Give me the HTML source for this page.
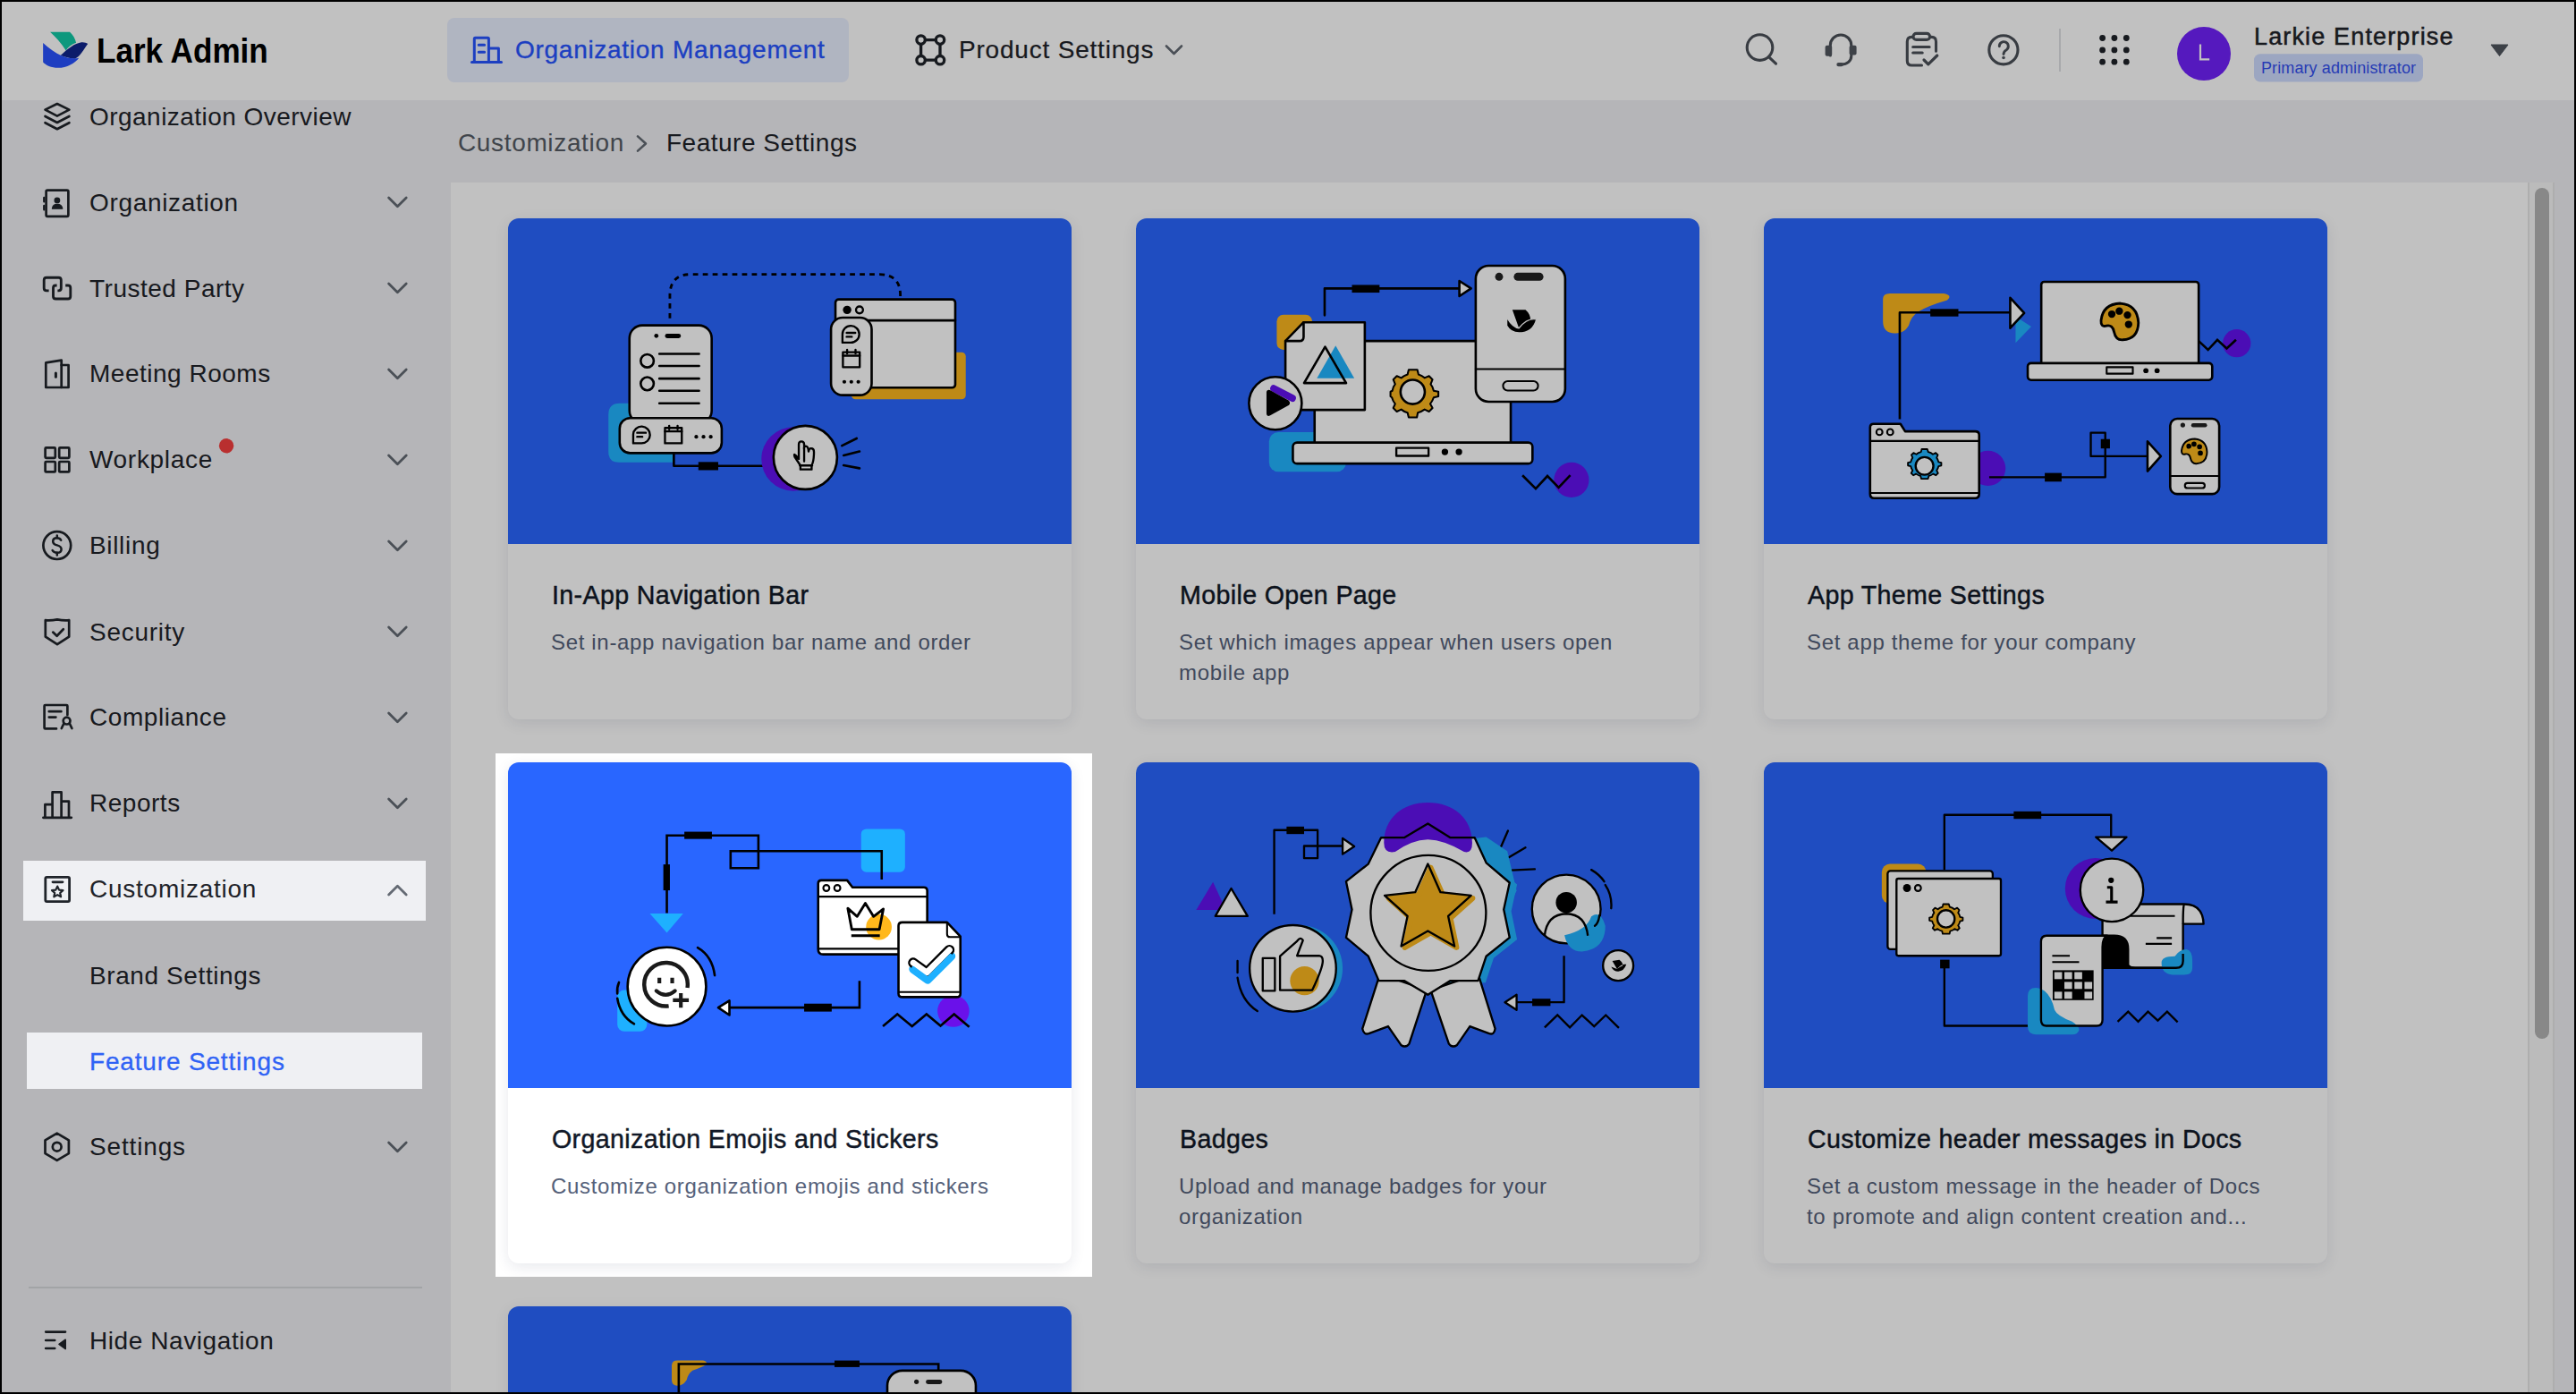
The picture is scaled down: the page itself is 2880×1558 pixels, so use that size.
<!DOCTYPE html>
<html><head><meta charset="utf-8">
<style>
*{box-sizing:border-box;margin:0;padding:0}
html,body{width:2880px;height:1558px;overflow:hidden;background:#000}
body{position:relative;font-family:"Liberation Sans",sans-serif;color:#1f2329}
.abs{position:absolute}
#hdr{left:2px;top:2px;width:2876px;height:110px;background:#fff}
#side{left:2px;top:112px;width:502px;height:1444px;background:#eff0f3}
#crumbbg{left:504px;top:112px;width:2374px;height:1444px;background:#eff0f3}
#cont{left:504px;top:204px;width:2322px;height:1352px;background:#fff}
#track{left:2826px;top:204px;width:30px;height:1352px;background:#f8f8f8;border-left:2px solid #e6e6e6;border-right:2px solid #e6e6e6}
#thumb{left:2834px;top:210px;width:16px;height:951px;border-radius:8px;background:#b4b4b4}
.nav{position:absolute;left:100px;height:60px;line-height:60px;font-size:28px;color:#1f2329;white-space:nowrap}
.ico{position:absolute}
.chev{position:absolute;left:433px;width:22px;height:12px}
.card{position:absolute;width:630px;height:560px;background:#fff;border-radius:12px;box-shadow:0 4px 16px rgba(25,40,75,0.10);overflow:hidden}
.card .img{position:absolute;left:0;top:0;width:630px;height:364px;background:#2966ff}
.card .t{position:absolute;left:49px;top:401px;height:40px;line-height:40px;font-size:28.6px;color:#111827;white-space:nowrap;-webkit-text-stroke:0.45px #111827;letter-spacing:0.36px}
.card .d{position:absolute;left:48px;top:457px;line-height:34px;font-size:24px;color:#55617a;white-space:nowrap;letter-spacing:0.67px}
#ovl{left:0;top:0;width:2880px;height:1558px;background:rgba(0,0,0,0.245);z-index:10}
.hl{z-index:11}
</style></head><body>
<div class="abs" id="hdr"></div>
<div class="abs" id="side"></div>
<div class="abs" id="crumbbg"></div>
<div class="abs" id="cont"></div>
<div class="abs" id="track"></div>
<div class="abs" id="thumb"></div>

<!-- HEADER -->
<!--HEADER_START-->
<svg class="abs" style="left:0;top:0" width="2880" height="120" viewBox="0 0 2880 120">
 <!-- logo: mapped from zoom [40,25]-[320,90] display 2576x598 -->
 <g transform="translate(40,25) scale(0.108696)">
  <path fill="#12c9a6" d="M148,100 L350,100 C385,130 405,170 415,210 C370,225 330,255 310,290 C260,210 200,150 148,100 Z"/>
  <path fill="#10268c" d="M255,340 C330,270 400,215 470,205 C500,203 520,210 535,220 C490,280 460,350 400,375 C350,370 300,355 255,340 Z"/>
  <path fill="#2852ff" d="M75,212 C140,270 200,315 260,340 C320,365 380,380 445,365 C400,420 320,468 230,468 C160,468 100,440 75,410 Z"/>
 </g>
 <!-- org mgmt button -->
 <rect x="500" y="20" width="449" height="72" rx="8" fill="#e9efff"/>
 <g fill="none" stroke="#2754ff" stroke-width="3" stroke-linecap="round" stroke-linejoin="round">
  <path d="M530.3,68 V43.5 Q530.3,42.3 531.5,42.3 H545.2 Q546.4,42.3 546.4,43.5 V68"/>
  <path d="M546.4,54 H557.4 V68"/>
  <path d="M527.5,69.6 H560.5"/>
  <path d="M535.2,50.3 H541.6 M535.2,58.2 H541.6"/>
 </g>
 <!-- product settings icon -->
 <g fill="none" stroke="#1f2329" stroke-width="3.3">
  <circle cx="1029.6" cy="44.6" r="4.7"/><circle cx="1051" cy="44.6" r="4.7"/>
  <circle cx="1029.6" cy="67.2" r="4.7"/><circle cx="1051" cy="67.2" r="4.7"/>
  <path d="M1034.3,44.6 H1046.3 M1034.3,67.2 H1046.3 M1029.6,49.3 V62.5 M1051,49.3 V62.5"/>
 </g>
 <path d="M1304,51.5 L1312.5,60 L1321,51.5" fill="none" stroke="#646a73" stroke-width="2.6" stroke-linecap="round" stroke-linejoin="round"/>
 <!-- right icons -->
 <g fill="none" stroke="#4b5058" stroke-width="3.1" stroke-linecap="round" stroke-linejoin="round">
  <circle cx="1967.5" cy="53.1" r="14.3"/>
  <path d="M1978.3,64.3 L1985.5,71.2"/>
  <path d="M2046.3,62 V50.7 A11.75,11.75 0 0 1 2069.8,50.7 V62.5 C2069.8,68 2065,72 2058.8,72"/>
  <path d="M2164.5,57.3 V46.4 Q2164.5,41.4 2159.5,41.4 H2137.3 Q2132.3,41.4 2132.3,46.4 V68 Q2132.3,73 2137.3,73 H2148.5"/>
  <rect x="2139" y="37.4" width="18.6" height="7" rx="3.5" fill="#fff"/>
  <path d="M2138.7,52.5 H2157.1 M2138.7,59 H2149.2"/>
  <path d="M2151,67 L2155.8,71.8 L2165.8,62" stroke-width="3.2"/>
  <circle cx="2239.9" cy="55.8" r="16.1"/>
  <path d="M2235.3,51.8 A5,5 0 1 1 2243.4,55.6 C2241.2,57 2240,58 2240,60.6" stroke-width="2.9"/>
 </g>
 <g fill="#51565f">
  <rect x="2040.6" y="50.7" width="7.6" height="12" rx="2"/>
  <rect x="2067.6" y="50.7" width="8" height="10.8" rx="2"/>
  <rect x="2053.3" y="69.9" width="7.6" height="4.4" rx="2.2"/>
  <circle cx="2240" cy="64.5" r="1.8"/>
 </g>
 <rect x="2302" y="32" width="2" height="48" fill="#dee0e3"/>
 <g fill="#1f2329">
  <circle cx="2350.6" cy="42.5" r="3.4"/><circle cx="2363.9" cy="42.5" r="3.4"/><circle cx="2377.3" cy="42.5" r="3.4"/>
  <circle cx="2350.6" cy="55.9" r="3.4"/><circle cx="2363.9" cy="55.9" r="3.4"/><circle cx="2377.3" cy="55.9" r="3.4"/>
  <circle cx="2350.6" cy="69.2" r="3.4"/><circle cx="2363.9" cy="69.2" r="3.4"/><circle cx="2377.3" cy="69.2" r="3.4"/>
 </g>
  <circle cx="2464" cy="60" r="30" fill="#7122fb"/>
 <path d="M2460,49.5 V66.3 H2470.2" fill="none" stroke="#fff" stroke-width="2.2"/>
 <rect x="2520" y="60.2" width="189" height="31.4" rx="7" fill="#cfdcff"/>
 <path d="M2785,50 L2804,50 L2794.5,62.5 Z" fill="#51565f" stroke="#51565f" stroke-width="1" stroke-linejoin="round"/>
</svg>
<div class="abs" style="left:108px;top:31px;height:52px;line-height:52px;font-size:39px;font-weight:bold;color:#000;white-space:nowrap;transform:scaleX(0.9);transform-origin:0 0">Lark Admin</div>
<div class="abs" style="left:576px;top:36px;height:40px;line-height:40px;font-size:28px;color:#2754ff;letter-spacing:0.72px;white-space:nowrap;-webkit-text-stroke:0.35px #2754ff">Organization Management</div>
<div class="abs" style="left:1072px;top:36px;height:40px;line-height:40px;font-size:28px;color:#1f2329;letter-spacing:0.8px;white-space:nowrap;-webkit-text-stroke:0.2px #1f2329">Product Settings</div>
<div class="abs" style="left:2520px;top:21px;height:40px;line-height:40px;font-size:27px;color:#1f2329;letter-spacing:1.15px;white-space:nowrap;-webkit-text-stroke:0.5px #1f2329">Larkie Enterprise</div>
<div class="abs" style="left:2528px;top:62px;height:28px;line-height:28px;font-size:18px;color:#3350f0;letter-spacing:0.1px;white-space:nowrap">Primary administrator</div>
<!--HEADER_END-->

<!-- SIDEBAR -->
<!--SIDEBAR_START-->
<svg class="abs" style="left:0;top:100px" width="504" height="1456" viewBox="0 100 504 1456">
 <g fill="none" stroke="#1f2329" stroke-width="2.7" stroke-linecap="round" stroke-linejoin="round">
  <!-- layers -->
  <path d="M50.5,122.6 L63.9,116 L77.4,122.6 L63.9,129.6 Z"/>
  <path d="M50.5,130 L63.9,137 L77.4,130"/>
  <path d="M50.5,137.2 L63.9,144.2 L77.4,137.2"/>
  <!-- organization -->
  <rect x="51.6" y="212.6" width="24.8" height="29.2" rx="1.5"/>
  <path d="M49.3,221 V225.3 M49.3,230 V234.3" stroke-width="2.4"/>
  <circle cx="63.9" cy="223.9" r="3.4" fill="#1f2329" stroke="none"/>
  <path d="M58.4,233.2 Q59,228.4 64,228.4 Q69,228.4 69.8,233.2 Z" fill="#1f2329" stroke-width="1.2"/>
  <!-- trusted party -->
  <path d="M54.6,324.9 H52 Q49.2,324.9 49.2,322 V313 Q49.2,310.2 52,310.2 H65.5 Q68.3,310.2 68.3,313 V322 Q68.3,324.9 65.5,324.9 H64.4" stroke-linecap="butt" stroke-width="2.85"/>
  <path d="M63.6,319 H62.3 Q59.5,319 59.5,321.8 V331.2 Q59.5,334 62.3,334 H76 Q78.8,334 78.8,331.2 V321.8 Q78.8,319 76,319 H73.2" stroke-linecap="butt" stroke-width="2.85"/>
  <!-- meeting rooms -->
  <path d="M51.3,433 V405.4 L68.7,402.7 V433 Z"/>
  <path d="M68.7,408 H76.6 V433 H68.7"/>
  <path d="M62.4,417 V421.2" stroke-width="3"/>
  <!-- workplace -->
  <rect x="50.6" y="500.4" width="11.2" height="11.4" rx="1"/>
  <rect x="66.2" y="500.4" width="11.2" height="11.4" rx="1"/>
  <rect x="50.6" y="516" width="11.2" height="11.4" rx="1"/>
  <rect x="66.2" y="516" width="11.2" height="11.4" rx="1"/>
  <!-- billing -->
  <circle cx="63.8" cy="609.6" r="15.4"/>
  <path d="M68.2,603.8 Q67,601.2 63.6,601.2 Q59.2,601.2 59.2,605 Q59.2,608.2 63.8,609.4 Q68.6,610.6 68.6,614 Q68.6,617.8 63.8,617.8 Q60,617.8 58.6,615" stroke-width="2.5"/>
  <path d="M63.8,598.6 V601.2 M63.8,617.8 V620.6" stroke-width="2.5"/>
  <!-- security -->
  <path d="M50.8,693.2 Q57,693.8 64,692.4 Q71,693.8 77.2,693.2 V711.6 L64,720.2 L50.8,711.6 Z"/>
  <path d="M59.2,706.6 L63.6,710.8 L70.8,703.2"/>
  <!-- compliance -->
  <path d="M63,814.4 H50.6 Q49.6,814.4 49.6,813.4 V789 Q49.6,788 50.6,788 H74.4 Q75.4,788 75.4,789 V799"/>
  <path d="M54.8,795.2 H68.4 M54.8,801.6 H62.4"/>
  <circle cx="74.6" cy="805.6" r="3.9"/>
  <path d="M71.2,809 L68.8,814 M78,809 L80.4,814"/>
  <!-- reports -->
  <path d="M50.4,913.6 V899.2 H58.6 V913.6 M58.6,913.6 V885.4 H68.6 V913.6 M68.6,913.6 V895.6 H77 V913.6"/>
  <path d="M48.4,913.8 H79.8"/>
  <!-- settings -->
  <path d="M63.7,1266.7 L76.9,1274.3 V1289.1 L63.7,1296.9 L50.5,1289.1 V1274.3 Z"/>
  <circle cx="63.7" cy="1281.7" r="4.9"/>
  <!-- hide nav -->
  <path d="M51.2,1488.6 H73 M51.2,1498 H61.2 M51.2,1507 H61.2"/>
 </g>
 <path d="M73.2,1497.2 L66,1502.4 L73.2,1507.6 Z" fill="#1f2329" stroke="#1f2329" stroke-width="1.6" stroke-linejoin="round"/>
 <circle cx="253.1" cy="498.3" r="8.2" fill="#f53f3f"/>
 <g fill="none" stroke="#646a73" stroke-width="2.8" stroke-linecap="round" stroke-linejoin="round">
  <path d="M434.6,221 L444.4,230.8 L454.2,221"/>
  <path d="M434.6,317 L444.4,326.8 L454.2,317"/>
  <path d="M434.6,413 L444.4,422.8 L454.2,413"/>
  <path d="M434.6,509 L444.4,518.8 L454.2,509"/>
  <path d="M434.6,605 L444.4,614.8 L454.2,605"/>
  <path d="M434.6,701 L444.4,710.8 L454.2,701"/>
  <path d="M434.6,797 L444.4,806.8 L454.2,797"/>
  <path d="M434.6,893 L444.4,902.8 L454.2,893"/>
  <path d="M434.6,1277 L444.4,1286.8 L454.2,1277"/>
 </g>
 <rect x="32" y="1438" width="440" height="2" fill="#d7d9dc"/>
</svg>
<div class="nav" style="top:101px;letter-spacing:0.465px">Organization Overview</div>
<div class="nav" style="top:197px;letter-spacing:0.673px">Organization</div>
<div class="nav" style="top:293px;letter-spacing:0.508px">Trusted Party</div>
<div class="nav" style="top:388px;letter-spacing:0.508px">Meeting Rooms</div>
<div class="nav" style="top:484px;letter-spacing:0.688px">Workplace</div>
<div class="nav" style="top:580px;letter-spacing:0.667px">Billing</div>
<div class="nav" style="top:677px;letter-spacing:0.729px">Security</div>
<div class="nav" style="top:772px;letter-spacing:0.567px">Compliance</div>
<div class="nav" style="top:868px;letter-spacing:0.517px">Reports</div>
<div class="nav" style="top:1061px;letter-spacing:0.6px">Brand Settings</div>
<div class="nav" style="top:1252px;letter-spacing:0.85px">Settings</div>
<div class="nav" style="top:1469px;letter-spacing:0.579px">Hide Navigation</div>
<!--SIDEBAR_END-->

<!-- CONTENT -->
<!--CONTENT_START-->
<div class="abs" style="left:512px;top:140px;height:40px;line-height:40px;font-size:28px;color:#555b63;letter-spacing:0.65px;white-space:nowrap">Customization</div>
<svg class="abs" style="left:700px;top:140px" width="40" height="40" viewBox="700 140 40 40"><path d="M713,152.4 L722,160.5 L713,168.6" fill="none" stroke="#646a73" stroke-width="2.6" stroke-linecap="round" stroke-linejoin="round"/></svg>
<div class="abs" style="left:745px;top:140px;height:40px;line-height:40px;font-size:28px;color:#1f2329;letter-spacing:0.5px;white-space:nowrap">Feature Settings</div>

<div class="card" style="left:568px;top:244px"><div class="img"><svg width="630" height="364" viewBox="0 0 2413 1394" style="position:absolute;left:0;top:0">
<g stroke="#000" stroke-width="10" stroke-linejoin="round" stroke-linecap="round">
 <path d="M693,428 V330 Q693,240 783,240 H1590 Q1680,240 1680,330 V345" fill="none" stroke-dasharray="22,20" stroke-linecap="butt" stroke-width="11"/>
 <path d="M430,840 Q430,792 478,792 H560 L705,1000 V1045 H475 Q430,1045 430,1000 Z" fill="#22b4ff" stroke="none"/>
 <rect x="520" y="458" width="352" height="420" rx="55" fill="#fff"/>
 <circle cx="635" cy="503" r="9" fill="#000" stroke="none"/>
 <rect x="672" y="494" width="68" height="19" rx="9.5" fill="#000" stroke="none"/>
 <circle cx="596" cy="610" r="28" fill="none"/>
 <circle cx="596" cy="708" r="28" fill="none"/>
 <path d="M648,580 H818 M648,632 H818 M648,686 H818 M648,738 H818 M648,792 H818" fill="none"/>
 <path d="M710,1000 V1060 H1092" fill="none"/>
 <rect x="815" y="1043" width="85" height="35" fill="#000" stroke="none"/>
 <rect x="478" y="855" width="437" height="150" rx="45" fill="#fff"/>
 <path d="M536,963 V925 A36,36 0 1 1 572,963 Z M553,918 H590 M553,935 H575" fill="none" stroke-width="9"/>
 <rect x="672" y="897" width="72" height="66" fill="none" stroke-width="9"/>
 <path d="M672,912 H744 M690,888 V903 M726,888 V903" fill="none" stroke-width="9"/>
 <circle cx="806" cy="935" r="8" fill="#000" stroke="none"/><circle cx="837" cy="935" r="8" fill="#000" stroke="none"/><circle cx="868" cy="935" r="8" fill="#000" stroke="none"/>
 <circle cx="1222" cy="1030" r="137" fill="#6412f0" stroke="none"/>
 <circle cx="1273" cy="1024" r="136" fill="#fff"/>
 <path d="M1268,1040 V968 Q1268,955 1256,955 Q1245,955 1245,968 V1030 L1232,1015 Q1222,1005 1228,1022 L1252,1058 V1075 H1300 V1058 Q1310,1040 1310,1000 Q1310,985 1298,985 Q1288,985 1287,998 Q1285,975 1275,975 Q1265,977 1268,990" fill="none" stroke-width="9"/>
 <path d="M1250,1058 H1302" fill="none" stroke-width="9"/>
 <path d="M1430,973 L1493,942 M1437,1015 L1505,998 M1437,1057 L1505,1070" fill="none"/>
 <rect x="1470" y="573" width="490" height="202" rx="18" fill="#fbb71f" stroke="none"/>
 <rect x="1402" y="347" width="513" height="378" rx="14" fill="#fff"/>
 <path d="M1402,437 H1915" fill="none"/>
 <circle cx="1452" cy="392" r="18" fill="#000" stroke="none"/>
 <circle cx="1505" cy="392" r="15" fill="none" stroke-width="9"/>
 <rect x="1383" y="425" width="174" height="332" rx="50" fill="#fff"/>
 <path d="M1432,532 V497 A36,36 0 1 1 1468,532 Z M1450,490 H1487 M1450,507 H1472" fill="none" stroke-width="9"/>
 <rect x="1434" y="573" width="72" height="64" fill="none" stroke-width="9"/>
 <path d="M1434,588 H1506 M1452,563 V578 M1488,563 V578" fill="none" stroke-width="9"/>
 <circle cx="1440" cy="700" r="8" fill="#000" stroke="none"/><circle cx="1470" cy="700" r="8" fill="#000" stroke="none"/><circle cx="1500" cy="700" r="8" fill="#000" stroke="none"/>
</g>
</svg></div><div class="t">In-App Navigation Bar</div><div class="d">Set in-app navigation bar name and order</div></div>
<div class="card" style="left:1270px;top:244px"><div class="img"><svg width="630" height="364" viewBox="0 0 2413 1394" style="position:absolute;left:0;top:0">
<g stroke="#000" stroke-width="10" stroke-linejoin="round" stroke-linecap="round">
 <rect x="570" y="915" width="330" height="170" rx="40" fill="#22b4ff" stroke="none"/>
 <rect x="765" y="525" width="840" height="450" fill="#fff"/>
 <rect x="672" y="960" width="1026" height="90" rx="18" fill="#fff"/>
 <rect x="1115" y="983" width="138" height="34" fill="none" stroke-width="9"/>
 <circle cx="1323" cy="1000" r="14" fill="#000" stroke="none"/><circle cx="1383" cy="1000" r="14" fill="#000" stroke="none"/>
 <path d="M1185,648 L1205,648 L1210,668 Q1225,673 1236,683 L1255,675 L1270,690 L1262,710 Q1272,722 1275,738 L1295,742 V762 L1275,767 Q1270,782 1260,794 L1270,812 L1255,827 L1236,818 Q1222,828 1207,832 L1203,852 H1168 L1163,832 Q1148,828 1136,818 L1117,827 L1102,812 L1110,794 Q1100,782 1096,767 L1090,762 V742 L1098,738 Q1100,722 1110,710 L1102,690 L1117,675 L1136,683 Q1148,673 1163,668 L1168,648 Z" fill="#fbb71f" stroke-width="8"/>
 <circle cx="1185" cy="743" r="52" fill="#fff" stroke-width="10"/>
 <path d="M808,415 V300 H1385" fill="none"/>
 <rect x="925" y="285" width="118" height="33" fill="#000" stroke="none"/>
 <path d="M1385,268 L1435,300 L1385,333 Z" fill="#fff"/>
 <rect x="603" y="413" width="152" height="150" rx="28" fill="#fbb71f" stroke="none"/>
 <path d="M640,525 L718,445 H980 V820 H640 Z" fill="#fff"/>
 <path d="M640,525 H700 Q718,525 718,507 V445" fill="none"/>
 <path d="M855,545 L935,685 H775 Z" fill="#22b4ff" stroke="none"/>
 <path d="M810,550 L900,705 H720 Z" fill="none"/>
 <circle cx="597" cy="792" r="113" fill="#fff"/>
 <path d="M590,728 L670,770" stroke="#6412f0" stroke-width="30" fill="none"/>
 <path d="M562,745 Q562,735 572,738 L652,782 Q660,790 652,798 L572,842 Q562,846 562,835 Z" fill="#000" stroke-width="6"/>
 <rect x="1455" y="203" width="383" height="582" rx="55" fill="#fff"/>
 <path d="M1455,645 H1838" fill="none" stroke-width="8"/>
 <circle cx="1555" cy="250" r="17" fill="#222" stroke="none"/>
 <rect x="1618" y="233" width="127" height="34" rx="17" fill="#222" stroke="none"/>
 <rect x="1572" y="697" width="150" height="40" rx="20" fill="none" stroke-width="8"/>
 <path d="M1612,392 L1668,392 Q1690,410 1690,440 Q1660,445 1640,470 Z" fill="#000" stroke="none"/>
 <path d="M1640,470 Q1675,425 1715,432 Q1700,490 1640,490 Q1605,490 1588,460 L1588,425 Q1615,470 1640,470 Z" fill="#000" stroke="#fff" stroke-width="5"/>
 <circle cx="1865" cy="1120" r="75" fill="#6412f0" stroke="none"/>
 <path d="M1655,1100 L1712,1157 L1762,1103 L1810,1152 L1860,1100" fill="none" stroke-linecap="butt" stroke-linejoin="miter"/>
</g>
</svg></div><div class="t">Mobile Open Page</div><div class="d">Set which images appear when users open<br>mobile app</div></div>
<div class="card" style="left:1972px;top:244px"><div class="img"><svg width="630" height="364" viewBox="0 0 2413 1394" style="position:absolute;left:0;top:0">

<g stroke="#000" stroke-width="10" stroke-linejoin="round" stroke-linecap="butt">
 <path d="M510,345 Q510,322 540,322 H770 Q810,330 785,350 Q700,375 660,400 Q630,420 620,460 Q600,495 560,492 Q510,490 510,440 Z" fill="#fbb71f" stroke="none"/>
 <path d="M582,860 V403 H1055" fill="none"/>
 <rect x="713" y="388" width="120" height="32" fill="#000" stroke="none"/>
 <path d="M1078,420 L1145,463 L1078,533 Z" fill="#22b4ff" stroke="none"/>
 <path d="M1055,340 L1115,405 L1055,470 Z" fill="#fff"/>
 <rect x="1188" y="272" width="674" height="358" rx="12" fill="#fff"/>
 <rect x="1130" y="620" width="790" height="72" rx="14" fill="#fff"/>
 <rect x="1468" y="637" width="112" height="28" fill="none" stroke-width="8"/>
 <circle cx="1636" cy="652" r="11" fill="#000" stroke="none"/><circle cx="1684" cy="652" r="11" fill="#000" stroke="none"/>
 <g transform="translate(1522,442)">
  <path d="M-78,-5 Q-70,-75 5,-78 Q78,-72 82,5 Q80,75 15,78 Q-15,80 -22,45 Q-28,12 -55,18 Q-80,25 -78,-5 Z" fill="#fbb71f" stroke="#000" stroke-width="11"/>
  <circle cx="-32" cy="-32" r="11" fill="#000"/><circle cx="0" cy="-45" r="11" fill="#000"/><circle cx="35" cy="-28" r="11" fill="#000"/><circle cx="40" cy="12" r="11" fill="#000"/>
 </g>
 <circle cx="2025" cy="535" r="60" fill="#6412f0" stroke="none"/>
 <path d="M1862,525 L1902,563 L1942,520 L1982,557 L2022,520" fill="none" stroke-linejoin="miter"/>
 <circle cx="960" cy="1070" r="75" fill="#6412f0" stroke="none"/>
 <path d="M455,1180 V895 Q455,880 470,880 H585 L605,912 H905 Q922,912 922,928 V1180 Q922,1198 905,1198 H472 Q455,1198 455,1180 Z" fill="#fff"/>
 <path d="M455,953 H922 M455,1176 H922" fill="none" stroke-width="8"/>
 <circle cx="495" cy="915" r="13" fill="none" stroke-width="8"/><circle cx="541" cy="915" r="13" fill="none" stroke-width="8"/>
 <path d="M688,988 L700,988 L704,1000 Q716,1003 724,1010 L736,1004 L745,1013 L740,1025 Q746,1033 748,1043 L760,1046 V1058 L748,1061 Q746,1071 740,1079 L746,1091 L737,1100 L725,1094 Q716,1101 706,1103 L703,1115 H674 L671,1103 Q661,1101 652,1094 L640,1100 L631,1091 L637,1079 Q631,1071 629,1061 L617,1058 V1046 L629,1043 Q631,1033 637,1025 L632,1013 L641,1004 L653,1010 Q661,1003 673,1000 L676,988 Z" fill="#22b4ff" stroke-width="7"/>
 <circle cx="688" cy="1060" r="38" fill="#fff" stroke-width="9"/>
 <path d="M965,1108 H1462 V918 H1400 V1018 H1645" fill="none" stroke-width="9"/>
 <rect x="1203" y="1090" width="72" height="37" fill="#000" stroke="none"/>
 <rect x="1443" y="945" width="39" height="40" fill="#000" stroke="none"/>
 <path d="M1643,955 L1700,1018 L1643,1082 Z" fill="#fff"/>
 <rect x="1740" y="858" width="210" height="322" rx="30" fill="#fff"/>
 <path d="M1740,1103 H1950" fill="none" stroke-width="8"/>
 <circle cx="1794" cy="885" r="10" fill="#222" stroke="none"/>
 <rect x="1830" y="877" width="68" height="17" rx="8.5" fill="#222" stroke="none"/>
 <rect x="1803" y="1133" width="85" height="22" rx="11" fill="none" stroke-width="8"/>
 <g transform="translate(1842,997) scale(0.68)">
  <path d="M-78,-5 Q-70,-75 5,-78 Q78,-72 82,5 Q80,75 15,78 Q-15,80 -22,45 Q-28,12 -55,18 Q-80,25 -78,-5 Z" fill="#fbb71f" stroke="#000" stroke-width="11"/>
  <circle cx="-32" cy="-32" r="11" fill="#000"/><circle cx="0" cy="-45" r="11" fill="#000"/><circle cx="35" cy="-28" r="11" fill="#000"/><circle cx="40" cy="12" r="11" fill="#000"/>
 </g>
</g>
</svg></div><div class="t">App Theme Settings</div><div class="d">Set app theme for your company</div></div>
<div class="abs hl" style="left:554px;top:842px;width:667px;height:585px;background:#fff;overflow:hidden"><div class="card" style="left:14px;top:10px"><div class="img"><svg width="630" height="364" viewBox="0 0 2413 1394" style="position:absolute;left:0;top:0">
<g stroke="#000" stroke-width="10" stroke-linejoin="miter" stroke-linecap="butt">
 <rect x="1512" y="285" width="188" height="185" rx="22" fill="#1eb0ff" stroke="none"/>
 <path d="M680,645 V313 H1072 V453 H953 V380 H1600 V502" fill="none"/>
 <rect x="755" y="297" width="118" height="31" fill="#000" stroke="none"/>
 <rect x="665" y="437" width="28" height="111" fill="#000" stroke="none"/>
 <path d="M607,647 H750 L680,730 Z" fill="#1eb0ff" stroke="none"/>
 <rect x="468" y="975" width="127" height="177" rx="30" fill="#1eb0ff" stroke="none"/>
 <path d="M475,942 Q465,965 468,990" fill="none" stroke-linecap="round"/>
 <path d="M468,1010 Q480,1085 540,1120" fill="none" stroke-linecap="round"/>
 <path d="M812,793 Q875,830 885,912" fill="none" stroke-linecap="round"/>
 <circle cx="680" cy="960" r="168" fill="#fff"/>
 <path d="M768,965 A93,93 0 1 0 688,1043" fill="none" stroke="#1a1a1a" stroke-width="17"/>
 <path d="M648,922 V946 M703,922 V946" fill="none" stroke="#1a1a1a" stroke-width="16"/>
 <path d="M635,978 Q675,1012 715,978" fill="none" stroke="#1a1a1a" stroke-width="16" stroke-linecap="round"/>
 <path d="M740,988 V1050 M706,1018 H774" fill="none" stroke="#1a1a1a" stroke-width="16"/>
 <path d="M1505,935 V1050 H950" fill="none"/>
 <rect x="1268" y="1033" width="118" height="34" fill="#000" stroke="none"/>
 <path d="M900,1050 L948,1020 V1082 Z" fill="#fff" stroke-linejoin="round"/>
 <path d="M1328,800 V518 Q1328,505 1342,505 H1452 L1475,535 H1780 Q1795,535 1795,550 V800 Q1795,822 1775,822 H1350 Q1328,822 1328,800 Z" fill="#fff" stroke-linejoin="round"/>
 <path d="M1328,575 H1795 M1328,798 H1795" fill="none" stroke-width="8"/>
 <circle cx="1363" cy="538" r="13" fill="none" stroke-width="8"/><circle cx="1410" cy="538" r="13" fill="none" stroke-width="8"/>
 <circle cx="1588" cy="705" r="55" fill="#ffb81c" stroke="none"/>
 <path d="M1455,625 L1472,715 H1590 L1607,628 L1565,660 L1530,603 L1495,660 Z" fill="none" stroke-width="11" stroke-linejoin="round"/>
 <path d="M1470,742 H1592" fill="none" stroke-width="11"/>
 <circle cx="1907" cy="1065" r="68" fill="#6a11ea" stroke="none"/>
 <path d="M1672,990 V700 Q1672,685 1688,685 H1880 L1937,745 V990 Q1937,1005 1920,1005 H1690 Q1672,1005 1672,990 Z" fill="#fff" stroke-linejoin="round"/>
 <path d="M1880,685 V735 Q1880,748 1893,748 H1937 M1672,983 H1937" fill="none" stroke-width="8"/>
 <path d="M1735,885 L1797,930 L1898,830" fill="none" stroke="#1eb0ff" stroke-width="36" stroke-linecap="round" stroke-linejoin="round"/>
 <path d="M1735,858 L1793,900 L1890,803" fill="none" stroke="#000" stroke-width="44" stroke-linecap="round" stroke-linejoin="round"/>
 <path d="M1735,858 L1793,900 L1890,803" fill="none" stroke="#fff" stroke-width="26" stroke-linecap="round" stroke-linejoin="round"/>
 <path d="M1735,880 L1797,925 L1895,826" fill="none" stroke="#1eb0ff" stroke-width="14" stroke-linecap="round" stroke-linejoin="round"/>
 <path d="M1605,1130 L1667,1078 L1730,1130 L1792,1078 L1852,1128 L1910,1078 L1975,1133" fill="none"/>
</g>
</svg></div><div class="t">Organization Emojis and Stickers</div><div class="d">Customize organization emojis and stickers</div></div></div>
<div class="card" style="left:1270px;top:852px"><div class="img"><svg width="630" height="364" viewBox="0 0 2413 1394" style="position:absolute;left:0;top:0">

<g stroke="#000" stroke-width="9" stroke-linejoin="round" stroke-linecap="butt">
 <path d="M258,632 L330,512 L385,632 Z" fill="#6412f0" stroke="none"/>
 <path d="M340,658 L408,540 L478,658 Z" fill="#fff"/>
 <path d="M592,650 V290 H778 V410 H720 V358 H885" fill="none"/>
 <rect x="645" y="275" width="75" height="32" fill="#000" stroke="none"/>
 <path d="M885,325 L935,360 L885,393 Z" fill="#fff"/>
 <path d="M1555,380 L1593,293 M1587,413 L1668,365 M1608,462 L1708,457" fill="none" stroke-linecap="round"/>
 <circle cx="700" cy="882" r="185" fill="#22b4ff" stroke="none"/>
 <circle cx="672" cy="882" r="185" fill="#fff"/>
 <path d="M435,850 V900 M435,922 Q450,1020 520,1065" fill="none" stroke-linecap="round"/>
 <circle cx="722" cy="935" r="62" fill="#fbb71f" stroke="none"/>
 <rect x="543" y="838" width="52" height="140" fill="none"/>
 <path d="M617,975 V830 L690,765 Q705,745 715,762 L690,828 H785 Q800,830 800,850 Q800,880 755,975 Z" fill="none"/>
 <path d="M1290,990 L1370,940 L1530,700 L1600,550 L1560,380 L1470,320 L1290,340 Z" fill="#22b4ff" stroke="none" transform="translate(30,0)"/>
 <path d="M1050,322 H1150 L1250,262 L1345,322 H1450 L1500,430 L1600,515 L1575,630 L1600,750 L1500,830 L1465,935 H1345 L1250,995 L1150,935 H1040 L995,830 L900,750 L925,630 L900,510 L995,435 Z" fill="#22b4ff" stroke="none" transform="translate(32,8)"/>
 <path d="M1045,905 L970,1140 Q975,1170 1000,1160 L1080,1130 L1135,1210 Q1155,1225 1170,1205 L1245,975 Z" fill="#fff"/>
 <path d="M1465,905 L1538,1140 Q1535,1170 1510,1160 L1430,1130 L1375,1210 Q1355,1225 1340,1205 L1262,975 Z" fill="#fff"/>
 <path d="M1050,322 H1150 L1250,262 L1345,322 H1450 L1500,430 L1600,515 L1575,630 L1600,750 L1500,830 L1465,935 H1345 L1250,995 L1150,935 H1040 L995,830 L900,750 L925,630 L900,510 L995,435 Z" fill="#fff"/>
 <path d="M1062,345 C1062,240 1140,172 1250,172 C1360,172 1440,240 1440,345 Q1440,392 1405,383 Q1320,332 1250,330 Q1180,332 1110,383 Q1062,392 1062,345 Z" fill="#6412f0" stroke="none"/>
 <path d="M1050,322 H1150 L1250,262 L1345,322 H1450" fill="none"/>
 <circle cx="1252" cy="645" r="247" fill="none"/>
 <path d="M0,-195 L54,-74 L185,-60 L87,28 L114,157 L0,92 L-114,157 L-87,28 L-185,-60 L-54,-74 Z" transform="translate(1262,640) scale(0.97)" fill="#fbb71f" stroke="#fbb71f" stroke-width="24"/>
 <path d="M0,-195 L54,-74 L185,-60 L87,28 L114,157 L0,92 L-114,157 L-87,28 L-185,-60 L-54,-74 Z" transform="translate(1250,630)" fill="none" stroke-width="9" stroke-linejoin="round"/>
 <circle cx="1843" cy="628" r="147" fill="#fff"/>
 <path d="M1835,740 Q1930,720 1950,660 Q1990,630 2010,700 Q2010,800 1910,810 Q1850,810 1835,740 Z" fill="#22b4ff" stroke="none"/>
 
 <circle cx="1843" cy="600" r="45" fill="#000" stroke="none"/>
 <path d="M1750,742 Q1760,650 1843,648 Q1925,650 1935,742" fill="none"/>
 <path d="M1950,460 Q1985,480 2005,510 M2010,525 Q2040,570 2035,625 M1985,655 Q1980,690 1965,700" fill="none" stroke-linecap="round"/>
 <circle cx="2065" cy="870" r="65" fill="#fff"/>
 <path d="M2040,850 L2070,845 Q2085,855 2085,870 Q2070,875 2060,885 Z M2035,875 Q2045,895 2065,895 Q2090,895 2100,865 Q2080,860 2060,885 Z" fill="#000" stroke="none"/>
 <path d="M1833,828 V1027 H1630" fill="none"/>
 <rect x="1697" y="1012" width="78" height="31" fill="#000" stroke="none"/>
 <path d="M1580,1027 L1630,995 V1060 Z" fill="#fff"/>
 <path d="M1750,1135 L1805,1082 L1858,1135 L1910,1082 L1962,1130 L2012,1082 L2068,1137" fill="none" stroke-linejoin="miter"/>
</g>
</svg></div><div class="t">Badges</div><div class="d">Upload and manage badges for your<br>organization</div></div>
<div class="card" style="left:1972px;top:852px"><div class="img"><svg width="630" height="364" viewBox="0 0 2413 1394" style="position:absolute;left:0;top:0">
<g stroke="#000" stroke-width="9" stroke-linejoin="round" stroke-linecap="butt">
 <path d="M773,460 V225 H1487 V320" fill="none"/>
 <rect x="1070" y="210" width="118" height="32" fill="#000" stroke="none"/>
 <path d="M1422,320 H1553 L1490,378 Z" fill="#fff"/>
 <path d="M773,880 V1128 H1140" fill="none"/>
 <rect x="755" y="845" width="40" height="37" fill="#000" stroke="none"/>
 <rect x="505" y="435" width="190" height="170" rx="35" fill="#fbb71f" stroke="none"/>
 <rect x="530" y="465" width="450" height="335" rx="12" fill="#fff"/>
 <rect x="568" y="498" width="447" height="330" rx="8" fill="#fff"/>
 <circle cx="613" cy="538" r="17" fill="#000" stroke="none"/>
 <circle cx="660" cy="538" r="13" fill="none" stroke-width="8"/>
 <path d="M780,595 L792,595 L796,607 Q808,610 816,617 L828,611 L837,620 L832,632 Q838,640 840,650 L852,653 V665 L840,668 Q838,678 832,686 L838,698 L829,707 L817,701 Q808,708 798,710 L795,722 H766 L763,710 Q753,708 744,701 L732,707 L723,698 L729,686 Q723,678 721,668 L709,665 V653 L721,650 Q723,640 729,632 L724,620 L733,611 L745,617 Q753,610 765,607 L768,595 Z" fill="#fbb71f" stroke-width="7" transform="translate(0,12)"/>
 <circle cx="780" cy="670" r="37" fill="#fff" stroke-width="9"/>
 <circle cx="1420" cy="540" r="130" fill="#6412f0" stroke="none"/>
 <path d="M1450,880 V607 H1800 Q1880,607 1883,692 H1795 V850 Q1795,880 1765,880 Z" fill="#fff"/>
 <path d="M1795,692 Q1795,615 1800,607" fill="none"/>
 <path d="M1570,658 H1760 M1682,752 H1747 M1635,777 H1747" fill="none" stroke-width="8"/>
 <path d="M1450,880 V742 H1500 Q1560,742 1560,800 V880 Z" fill="#000"/>
 <path d="M1703,860 Q1700,830 1760,830 Q1780,800 1810,800 Q1835,805 1835,850 V880 Q1835,910 1800,910 H1750 Q1703,905 1703,860 Z" fill="#22b4ff" stroke="none"/>
 <path d="M1560,870 Q1570,880 1590,880 H1765 Q1795,880 1795,850 V820" fill="none"/>
 <circle cx="1490" cy="547" r="135" fill="#fff"/>
 <circle cx="1487" cy="505" r="12" fill="#000" stroke="none"/>
 <path d="M1470,535 H1489 V598 M1465,598 H1515" fill="none" stroke-width="12"/>
 <path d="M1212,742 H1470 Q1450,750 1450,790 V1103 Q1450,1128 1425,1128 H1212 Q1187,1128 1187,1103 V767 Q1187,742 1212,742 Z" fill="#fff" stroke="none"/>
 <path d="M1130,1000 Q1130,965 1165,965 Q1225,970 1245,1060 Q1255,1085 1320,1110 Q1350,1130 1350,1145 Q1345,1165 1320,1165 H1165 Q1130,1165 1130,1130 Z" fill="#22b4ff" stroke="none"/>
 <path d="M1212,742 H1470 Q1450,750 1450,790 V1103 Q1450,1128 1425,1128 H1212 Q1187,1128 1187,1103 V767 Q1187,742 1212,742 Z" fill="none"/>
 <path d="M1235,828 H1310 M1235,855 H1350" fill="none" stroke-width="8"/>
 <rect x="1237" y="890" width="175" height="128" fill="#000" stroke="none"/>
 <g fill="#fff" stroke="none">
  <rect x="1244" y="898" width="33" height="30"/><rect x="1287" y="898" width="33" height="30"/><rect x="1330" y="898" width="33" height="30"/>
  <rect x="1287" y="940" width="33" height="30"/><rect x="1330" y="940" width="33" height="30"/><rect x="1373" y="940" width="33" height="30"/>
  <rect x="1244" y="982" width="33" height="30"/><rect x="1287" y="982" width="33" height="30"/><rect x="1373" y="982" width="33" height="30"/>
 </g>
 <path d="M1515,1110 L1560,1067 L1603,1110 L1645,1067 L1687,1105 L1727,1067 L1772,1112" fill="none" stroke-linejoin="miter"/>
</g>
</svg></div><div class="t">Customize header messages in Docs</div><div class="d">Set a custom message in the header of Docs<br>to promote and align content creation and...</div></div>
<div class="card" style="left:568px;top:1460px"><div class="img"><svg width="630" height="364" viewBox="0 0 2413 1394" style="position:absolute;left:0;top:0">
<g stroke="#000" stroke-width="10" stroke-linejoin="round">
 <path d="M701,255 Q701,232 725,232 H835 Q855,235 848,250 Q830,260 790,275 Q770,290 765,315 Q750,340 725,340 Q701,340 701,315 Z" fill="#fbb71f" stroke="none"/>
 <path d="M731,420 V247 H1843 V275" fill="none" stroke-linejoin="miter"/>
 <rect x="1398" y="232" width="107" height="28" fill="#000" stroke="none"/>
 <rect x="1624" y="275" width="379" height="500" rx="65" fill="#fff"/>
 <circle cx="1749" cy="323" r="10" fill="#222" stroke="none"/>
 <rect x="1789" y="314" width="70" height="19" rx="9.5" fill="#222" stroke="none"/>
</g>
</svg></div></div>
<!--CONTENT_END-->

<div class="abs" id="ovl"></div>
<!--HIGHLIGHT_START-->
<div class="abs hl" style="left:26px;top:962px;width:450px;height:67px;background:#eff0f3"></div>
<div class="abs hl" style="left:30px;top:1154px;width:442px;height:63px;background:#eff0f3"></div>
<svg class="abs hl" style="left:0;top:950px" width="504" height="100" viewBox="0 950 504 100">
 <g fill="none" stroke="#1f2329" stroke-width="2.8" stroke-linejoin="round">
  <rect x="50.8" y="980.3" width="26.8" height="27.4" rx="1.6"/>
  <path d="M59,985.8 H70" stroke-linecap="round"/>
  <path d="M64.2,990.6 L66.1,994.6 L70.4,995.1 L67.2,998 L68.1,1002.3 L64.2,1000.1 L60.3,1002.3 L61.2,998 L58,995.1 L62.3,994.6 Z" stroke-width="2.2"/>
 </g>
 <path d="M434.6,1000 L444.4,990.2 L454.2,1000" fill="none" stroke="#646a73" stroke-width="2.8" stroke-linecap="round" stroke-linejoin="round"/>
</svg>
<div class="nav hl" style="top:964px;letter-spacing:0.75px">Customization</div>
<div class="nav hl" style="top:1157px;letter-spacing:0.83px;color:#2f62f5;-webkit-text-stroke:0.3px #2f62f5">Feature Settings</div>
<!--HIGHLIGHT_END-->
<div class="abs" style="left:0;top:0;width:2880px;height:2px;background:#000;z-index:20"></div>
<div class="abs" style="left:0;top:1556px;width:2880px;height:2px;background:#000;z-index:20"></div>
<div class="abs" style="left:0;top:0;width:2px;height:1558px;background:#000;z-index:20"></div>
<div class="abs" style="left:2878px;top:0;width:2px;height:1558px;background:#000;z-index:20"></div>
</body></html>
